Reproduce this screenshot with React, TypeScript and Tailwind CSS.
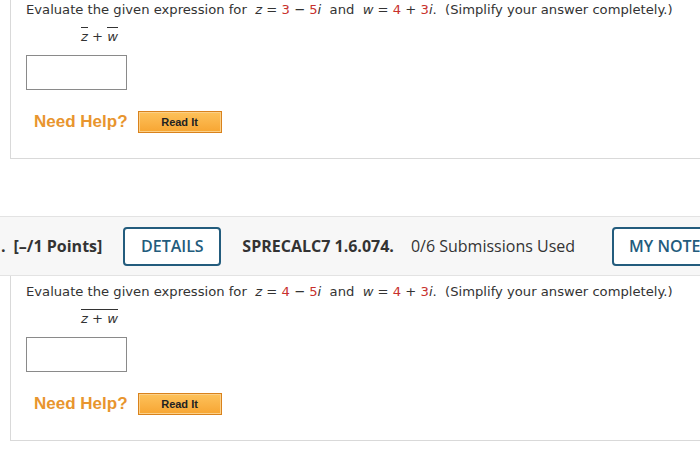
import React from 'react';

const RED = 'text-[#c8312d]';

function Question({ a, b, conjSeparate, top }: { a: string; b: string; conjSeparate: boolean; top: string }) {
  return (
    <div className={`ml-[10px] border-l border-b border-[#d9d9d9] pl-[15px] font-['DejaVu_Sans',sans-serif] text-[13.15px] text-[#333] ${top}`}>
      <p className="leading-[18px] whitespace-nowrap">
        Evaluate the given expression for&nbsp; <i>z</i> = <span className={RED}>{a}</span> &minus;{' '}
        <span className={RED}>5</span><i>i</i>&nbsp; and&nbsp; <i>w</i> = <span className={RED}>{b}</span> +{' '}
        <span className={RED}>3</span><i>i</i>.&nbsp; (Simplify your answer completely.)
      </p>
      <div className="ml-[55px] mt-[9px] h-[18px] leading-[18px]">
        {conjSeparate ? (
          <span>
            <i className="border-t border-[#333] pt-[1px]">z</i> + <i className="border-t border-[#333] pt-[1px]">w</i>
          </span>
        ) : (
          <span className="border-t border-[#333] pt-[1px]">
            <i>z</i> + <i>w</i>
          </span>
        )}
      </div>
      <div className="mt-[9px] h-[35px] w-[101px] border border-[#8a8a8a] bg-white" />
      <div className="mt-[21px] flex h-[22px] items-center gap-[10px] pl-[8px] mb-[25px]">
        <span className="font-['Liberation_Sans',sans-serif] text-[17px] font-bold leading-[22px] text-[#e8952e]">Need Help?</span>
        <button className="h-[22px] w-[84px] border border-[#d9821c] bg-gradient-to-b from-[#fdc25a] to-[#f7a531] shadow-[inset_0_0_0_1px_#fbd089] font-['Liberation_Sans',sans-serif] text-[11px] font-bold text-[#222]">
          Read It
        </button>
      </div>
    </div>
  );
}

export default function App() {
  return (
    <div className="h-[457px] w-[700px] overflow-hidden bg-white">
      <Question a="3" b="4" conjSeparate={true} top="pt-[1px]" />
      <div className="mt-[57px] flex h-[60px] items-center border-t border-b border-[#e3e3e3] bg-[#f7f7f7] font-['Open_Sans',sans-serif] text-[16px] text-[#333] whitespace-nowrap">
        <span className="ml-[1px] font-bold">.</span>
        <span className="ml-[8px] font-bold">[&ndash;/1 Points]</span>
        <button className="ml-[21px] h-[39px] w-[98px] shrink-0 rounded-[4px] border-2 border-[#235c7d] bg-white font-semibold text-[#235c7d]">
          DETAILS
        </button>
        <span className="ml-[21px] font-bold">SPRECALC7 1.6.074.</span>
        <span className="ml-[17px]">0/6 Submissions Used</span>
        <button className="ml-[37px] h-[39px] w-[110px] shrink-0 rounded-[4px] border-2 border-[#235c7d] bg-white pl-[15px] text-left font-semibold text-[#235c7d]">
          MY NOTES
        </button>
      </div>
      <Question a="4" b="4" conjSeparate={false} top="pt-[7px]" />
    </div>
  );
}
